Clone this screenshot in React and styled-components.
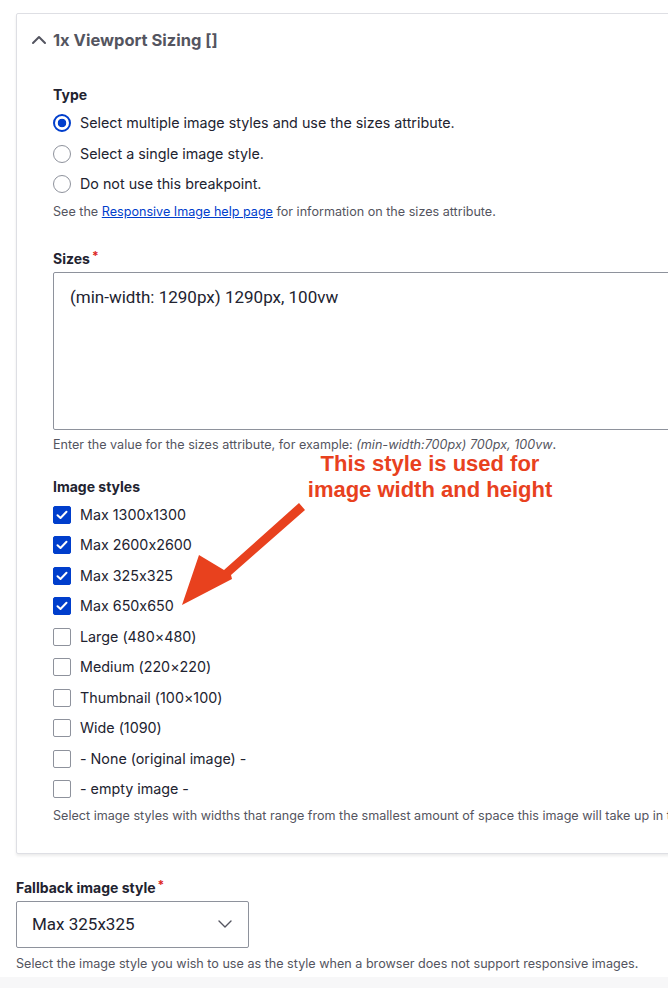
import styled, { createGlobalStyle } from "styled-components";

const GlobalStyle = createGlobalStyle`
    html, body {
        margin: 0;
        padding: 0;
        background: #fff;
    }
    * {
        box-sizing: border-box;
    }
`;

const blue = "#003ecc";
const red = "#e8411e";

const radios = [
    { label: "Select multiple image styles and use the sizes attribute.", checked: true },
    { label: "Select a single image style.", checked: false },
    { label: "Do not use this breakpoint.", checked: false },
];

const styles = [
    { label: "Max 1300x1300", checked: true },
    { label: "Max 2600x2600", checked: true },
    { label: "Max 325x325", checked: true },
    { label: "Max 650x650", checked: true },
    { label: "Large (480×480)", checked: false },
    { label: "Medium (220×220)", checked: false },
    { label: "Thumbnail (100×100)", checked: false },
    { label: "Wide (1090)", checked: false },
    { label: "- None (original image) -", checked: false },
    { label: "- empty image -", checked: false },
];

const App = () => {
    return (
        <Page>
            <GlobalStyle />
            <Main>
                <Card>
                    <Summary>
                        <svg width="16" height="16" viewBox="0 0 16 16" fill="none">
                            <path d="M2 11 L8 5 L14 11" stroke="#545560" strokeWidth="2" strokeLinecap="round" strokeLinejoin="round" />
                        </svg>
                        <SummaryTitle>1x Viewport Sizing []</SummaryTitle>
                    </Summary>

                    <CardBody>
                        <Label>Type</Label>
                        <OptionList>
                            {radios.map((r) => (
                                <Option key={r.label}>
                                    <Radio $checked={r.checked} />
                                    <OptionText>{r.label}</OptionText>
                                </Option>
                            ))}
                        </OptionList>
                        <Help $top={4}>
                            See the <HelpLink>Responsive Image help page</HelpLink> for information on the sizes attribute.
                        </Help>

                        <Label $top={30}>Sizes<Required>*</Required></Label>
                        <TextArea>(min-width: 1290px) 1290px, 100vw</TextArea>
                        <Help $top={7}>
                            Enter the value for the sizes attribute, for example: <em>(min-width:700px) 700px, 100vw</em>.
                        </Help>

                        <Label $top={25}>Image styles</Label>
                        <OptionList>
                            {styles.map((s) => (
                                <Option key={s.label}>
                                    <Checkbox $checked={s.checked}>
                                        {s.checked && (
                                            <svg width="12" height="10" viewBox="0 0 12 10" fill="none">
                                                <path d="M1.5 5.2 L4.5 8 L10.5 1.8" stroke="#fff" strokeWidth="2" strokeLinecap="round" strokeLinejoin="round" />
                                            </svg>
                                        )}
                                    </Checkbox>
                                    <OptionText>{s.label}</OptionText>
                                </Option>
                            ))}
                        </OptionList>
                        <Help $top={3} $nowrap>
                            Select image styles with widths that range from the smallest amount of space this image will take up in the layout to the largest.
                        </Help>
                    </CardBody>
                </Card>

                <Fallback>
                    <Label>Fallback image style<Required>*</Required></Label>
                    <Select>
                        <span>Max 325x325</span>
                        <svg width="14" height="8" viewBox="0 0 14 8" fill="none">
                            <path d="M1 1 L7 7 L13 1" stroke="#545560" strokeWidth="1.4" strokeLinecap="round" strokeLinejoin="round" />
                        </svg>
                    </Select>
                    <Help $top={8}>
                        Select the image style you wish to use as the style when a browser does not support responsive images.
                    </Help>
                </Fallback>

                <Note>
                    This style is used for<br />image width and height
                </Note>
                <Arrow width="140" height="120" viewBox="0 0 140 120">
                    <path d="M120 11 L126 18 L52 83 L53 87 L3 113 L20 63 L45 78 Z" fill={red} />
                </Arrow>
            </Main>
            <Footer />
        </Page>
    );
};

export default App;

const Page = styled.div`
    width: 668px;
    height: 988px;
    overflow: hidden;
    display: flex;
    flex-direction: column;
    font-family: Inter, "Noto Sans", sans-serif;
    font-feature-settings: "calt" 0;
    color: #222330;
`;

const Main = styled.div`
    position: relative;
    padding: 13px 0 5px 16px;
    background: #fff;
`;

const Footer = styled.div`
    flex: 1;
    background: #f7f7f8;
`;

const Card = styled.div`
    width: 720px;
    border: 1px solid #dedfe4;
    border-radius: 2px;
    box-shadow: 0 2px 3px rgba(0, 0, 0, 0.08);
    background: #fff;
    padding-bottom: 29px;
`;

const Summary = styled.div`
    display: flex;
    align-items: center;
    gap: 6px;
    padding: 16px 14px 16px 14px;
    height: 52px;
`;

const SummaryTitle = styled.div`
    font-size: 16.5px;
    line-height: 20px;
    font-weight: 700;
    color: #545560;
`;

const CardBody = styled.div`
    padding: 20px 0 0 36px;
`;

const Label = styled.div`
    font-size: 14px;
    line-height: 18px;
    font-weight: 700;
    margin-top: ${(p) => p.$top || 0}px;
    display: flex;
    align-items: flex-start;
`;

const Required = styled.span`
    color: #dc2323;
    font-size: 12px;
    line-height: 12px;
    margin-left: 2px;
`;

const OptionList = styled.div`
    display: flex;
    flex-direction: column;
    margin-top: 4px;
`;

const Option = styled.div`
    display: flex;
    align-items: center;
    gap: 9px;
    height: 30.5px;
`;

const OptionText = styled.span`
    font-size: 14.3px;
    line-height: 18px;
`;

const Radio = styled.span`
    width: 18px;
    height: 18px;
    border-radius: 50%;
    flex-shrink: 0;
    border: ${(p) => (p.$checked ? `2px solid ${blue}` : "1px solid #8e929c")};
    background: ${(p) => (p.$checked ? `radial-gradient(circle, ${blue} 0 4px, #fff 4.6px)` : "#fff")};
`;

const Checkbox = styled.span`
    width: 18px;
    height: 18px;
    border-radius: 2px;
    flex-shrink: 0;
    display: flex;
    align-items: center;
    justify-content: center;
    border: 1px solid ${(p) => (p.$checked ? blue : "#8e929c")};
    background: ${(p) => (p.$checked ? blue : "#fff")};
`;

const Help = styled.div`
    font-size: 12.6px;
    line-height: 16px;
    color: #545560;
    margin-top: ${(p) => p.$top || 0}px;
    white-space: ${(p) => (p.$nowrap ? "nowrap" : "normal")};

    em {
        font-style: italic;
    }
`;

const HelpLink = styled.a`
    color: ${blue};
    text-decoration: underline;
`;

const TextArea = styled.div`
    margin-top: 4px;
    height: 158px;
    border: 1px solid #8e929c;
    border-radius: 2px;
    padding: 14px 16px;
    font-size: 17px;
    line-height: 20px;
    font-family: Roboto, "Liberation Sans", sans-serif;
`;

const Fallback = styled.div`
    padding-top: 25px;
`;

const Select = styled.div`
    margin-top: 4px;
    width: 233px;
    height: 47px;
    border: 1px solid #8e929c;
    border-radius: 2px;
    display: flex;
    align-items: center;
    justify-content: space-between;
    padding: 0 16px 0 15px;
    font-size: 17px;
    font-family: Roboto, "Liberation Sans", sans-serif;
`;

const Note = styled.div`
    position: absolute;
    left: 290px;
    top: 451px;
    width: 280px;
    text-align: center;
    color: ${red};
    font-family: "Liberation Sans", Arial, sans-serif;
    font-weight: 700;
    font-size: 22px;
    line-height: 26px;
`;

const Arrow = styled.svg`
    position: absolute;
    left: 179px;
    top: 492px;
`;
